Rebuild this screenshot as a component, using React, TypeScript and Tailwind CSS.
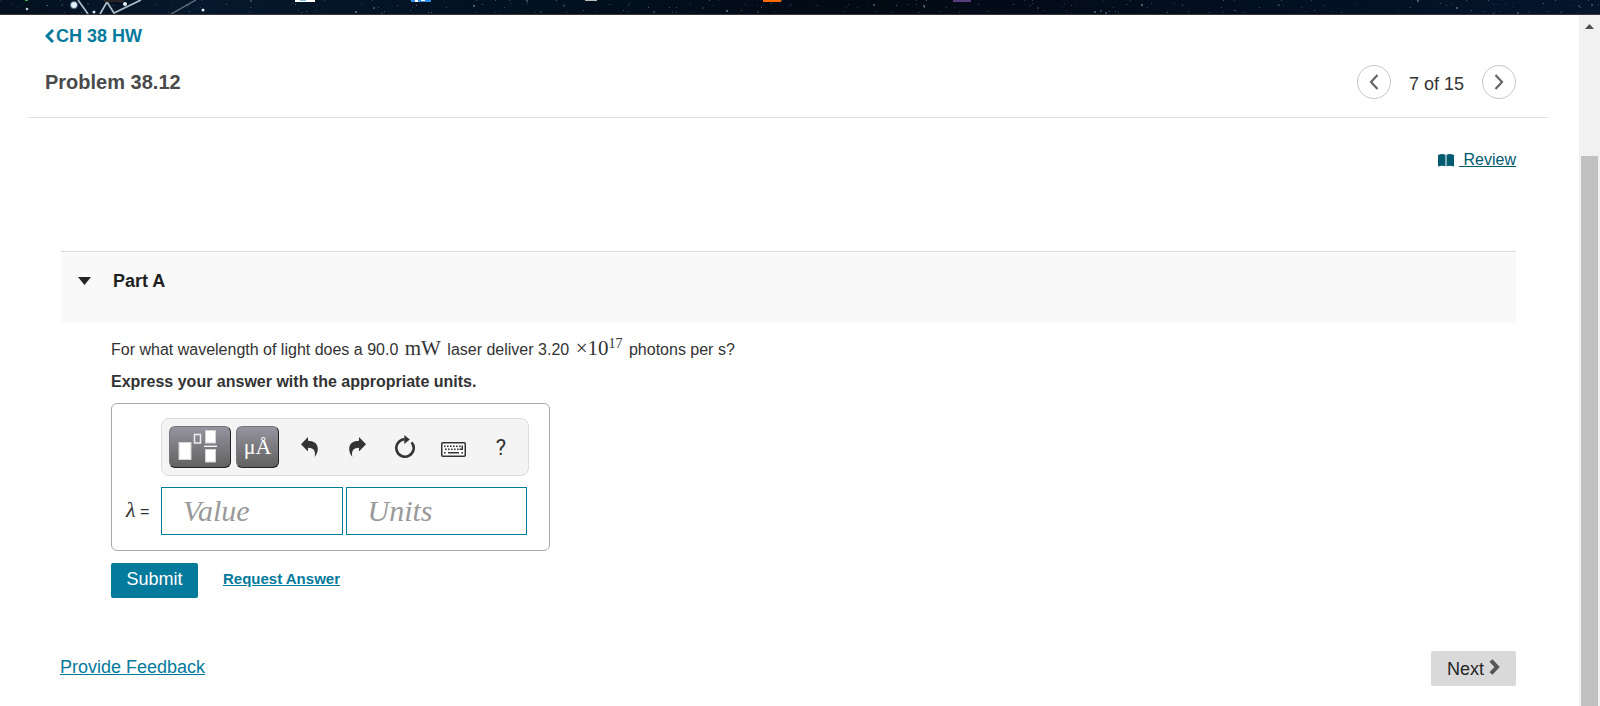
import React from "react";

const LINK = "text-[#047a9c]";

function Stars() {
  const stars = Array.from({ length: 240 }, (_, i) => {
    const x = (i * 397 + ((i * i * 31) % 211)) % 1600;
    const y = (i * 53 + ((i * i) % 7)) % 14;
    const o = 0.1 + ((i * 37) % 40) / 100;
    return { x, y, o, s: i % 9 === 0 ? 2 : 1 };
  });
  return (
    <svg aria-hidden="true" className="block h-[14px] w-full" viewBox="0 0 1600 14" preserveAspectRatio="xMidYMid slice">
      <defs>
        <linearGradient id="sky">
          <stop offset="0" stopColor="#04101f" />
          <stop offset="0.12" stopColor="#06182d" />
          <stop offset="0.3" stopColor="#021222" />
          <stop offset="0.55" stopColor="#020a14" />
          <stop offset="0.8" stopColor="#031022" />
          <stop offset="1" stopColor="#04152c" />
        </linearGradient>
      </defs>
      <rect width="1600" height="14" fill="url(#sky)" />
      {stars.map((s, i) => (
        <rect key={i} x={s.x} y={s.y} width={s.s} height={s.s} fill="#9fb8cf" opacity={s.o} />
      ))}
      <g stroke="#b9cdd6" strokeWidth="1.8" fill="none" opacity="0.9">
        <path d="M78 0 88 14M107 2 100 14M107 2l7 11 27-13" />
        <path d="M196 0 171 14" strokeWidth="1.4" opacity="0.55" />
      </g>
      <circle cx="74" cy="5" r="4.2" fill="#7fa4c4" opacity="0.5" />
      <circle cx="74" cy="5" r="3" fill="#e4f1fa" />
      <circle cx="94" cy="12" r="1.5" fill="#cfe0ee" />
      <circle cx="125" cy="4" r="2" fill="#e5eef5" />
      <circle cx="203" cy="10" r="1.5" fill="#dfe9f0" />
      <circle cx="27" cy="9" r="1.3" fill="#b9cddd" />
      <rect x="104" width="20" height="2" fill="#2a2422" />
      <rect x="25" width="3" height="1" fill="#38b54a" />
      <rect x="295" width="20" height="2" fill="#fff" />
      <rect x="300" width="6" height="1" fill="#7dbbe6" />
      <rect x="411" width="20" height="2" fill="#2d8ee8" />
      <path d="M415 0h3v2h-3zM421 0h4v1h-4z" fill="#fff" />
      <rect x="585" width="12" height="1" fill="#bbb" />
      <rect x="729" width="18" height="2" fill="none" />
      <rect x="763" width="18" height="2" fill="#ff6a00" />
      <rect x="953" width="18" height="2" fill="#563d7c" />
    </svg>
  );
}

function Undo({ flip = false }: { flip?: boolean }) {
  return (
    <svg width="17" height="20" viewBox="0 0 17 20" fill="#333" aria-hidden="true" className={flip ? "-scale-x-100" : ""}>
      <path d="M0 7.300 7 0V3.800C12.500 4 17 6.300 16.800 12.300 16.700 15.500 15.300 18 13.700 20 14.600 14.800 13.500 10.900 7 10.800V14.400Z" />
    </svg>
  );
}

function Reset() {
  return (
    <svg width="22" height="24" viewBox="0 0 22 24" fill="none" aria-hidden="true">
      <path d="M17.600 7.300A8.700 8.700 0 1 1 10.500 4.300" stroke="#333" strokeWidth="2.600" />
      <path d="M10.300 0 15.800 4.500 10.300 9Z" fill="#333" />
    </svg>
  );
}

function Keyboard() {
  return (
    <svg width="25" height="15" viewBox="0 0 25 15" fill="#333" aria-hidden="true">
      <rect x="0.750" y="0.750" width="23.500" height="13.500" rx="1" fill="#fff" stroke="#333" strokeWidth="1.500" />
      {[3, 6, 9, 12, 15, 18].map((x) => (
        <rect key={x} x={x} y="3.500" width="1.600" height="1.600" />
      ))}
      {[4, 7, 10, 13, 16].map((x) => (
        <rect key={x} x={x} y="6.500" width="1.600" height="1.600" />
      ))}
      <path d="M20.500 3.500H22v4.600h-3.500V6.500h2zM3 10h1.600v1.600H3zM7 10h11v1.600H7zM20.400 10H22v1.600h-1.600z" />
    </svg>
  );
}

const toolButton =
  "flex h-[42px] items-center justify-center rounded-[6px] border border-[#77757c] border-r-[#222] border-b-[#222] bg-linear-to-b from-[#97949f] to-[#626262]";
const iconButton = "flex h-10 w-12 items-center justify-center";
const field =
  "h-12 min-w-0 flex-1 border border-[#047a9c] bg-white px-[21px] font-['Liberation_Serif',serif] text-[30px] italic text-[#333] outline-none placeholder:text-[#999] placeholder:opacity-100";
const math = "mx-[2px] font-['Liberation_Serif',serif] text-[21px] leading-none";

export default function App() {
  return (
    <div className="flex min-h-screen flex-col bg-white font-['Liberation_Sans',Arial,sans-serif] text-base text-[#333]">
      <div className="border-b border-[#3a3536] bg-[#020d1a]">
        <Stars />
      </div>
      <div className="flex flex-1">
        <main className="flex min-w-0 flex-1 flex-col pr-[31px] pl-7">
          <header className="border-b border-[#dedede] pt-[9px] pr-8 pb-[18px] pl-[17px]">
            <a href="#hw" className={`inline-flex items-center gap-px text-lg leading-6 font-bold ${LINK}`}>
              <svg width="10" height="14" viewBox="0 0 10 14" fill="none" stroke="currentColor" strokeWidth="3" aria-hidden="true">
                <path d="M8 1 2 7l6 6" />
              </svg>
              CH 38 HW
            </a>
            <div className="mt-[15px] flex items-center justify-between">
              <h1 className="text-xl leading-7 font-bold text-[#4a4a4a]">Problem 38.12</h1>
              <nav className="flex items-center" aria-label="Problems">
                <button aria-label="Previous" className="flex size-[34px] items-center justify-center rounded-full border border-[#c7c7c7]">
                  <svg width="10" height="16" viewBox="0 0 10 16" fill="none" stroke="#666" strokeWidth="2.200" aria-hidden="true">
                    <path d="M8.500 1 2 8l6.500 7" />
                  </svg>
                </button>
                <span className="px-[18px] pt-1 text-lg leading-6">7 of 15</span>
                <button aria-label="Next problem" className="flex size-[34px] items-center justify-center rounded-full border border-[#c7c7c7]">
                  <svg width="10" height="16" viewBox="0 0 10 16" fill="none" stroke="#666" strokeWidth="2.200" aria-hidden="true">
                    <path d="M1.500 1 8 8l-6.500 7" />
                  </svg>
                </button>
              </nav>
            </div>
          </header>

          <div className="flex justify-end pt-[30px] pr-8">
            <a href="#review" className="flex items-center gap-[5px] leading-6 text-[#005a70]">
              <svg width="16" height="13" viewBox="0 0 16 13" fill="currentColor" aria-hidden="true">
                <path d="M0 1Q4-.8 7.500 .8V12.300Q4 11 0 12.600ZM16 1Q12-.8 8.500 .8V12.300Q12 11 16 12.600Z" />
              </svg>
              <span className="whitespace-pre underline"> Review</span>
            </a>
          </div>

          <section className="mt-[79px] mr-8 ml-[33px]">
            <div className="flex h-[72px] border-t border-[#dcdcdc] bg-[#f9f9f9] pt-[17px] pl-[17px]">
              <button className="flex h-6 items-center gap-[22px] text-lg leading-6 font-bold text-[#1f1f1f]">
                <svg width="13" height="8" viewBox="0 0 13 8" fill="#252525" aria-hidden="true">
                  <path d="M0 0h13L6.500 8Z" />
                </svg>
                Part A
              </button>
            </div>
            <div className="pl-[50px]">
              <p className="pt-[13px] leading-7">
                For what wavelength of light does a 90.0 <span className={math}>mW</span> laser deliver 3.20{" "}
                <span className={math}>
                  ×10<sup className="text-[14px] leading-none">17</sup>
                </span>{" "}
                photons per s?
              </p>
              <p className="pt-1 leading-7 font-bold">Express your answer with the appropriate units.</p>

              <div className="mt-[7px] w-[439px] rounded-[6px] border border-[#a9a9a9] pt-[14px] pr-5 pb-[15px] pl-[14px]">
                <div className="ml-[35px] flex h-[58px] items-center rounded-lg border border-[#dcdcdc] bg-[#f4f4f4] pl-[7px]">
                  <button aria-label="Templates" className={`${toolButton} w-[62px]`}>
                    <svg width="44" height="34" viewBox="0 0 44 34" fill="#fff" stroke="#d4d4d4" aria-hidden="true">
                      <rect x="1" y="12.500" width="12" height="17" />
                      <rect x="16.500" y="4.500" width="6" height="8.500" fill="none" stroke="#eee" strokeWidth="1.500" />
                      <rect x="27.500" y="0.500" width="10" height="12.500" />
                      <rect x="27.500" y="19.500" width="10" height="12.500" />
                      <path d="M26 16.300h13" stroke="#fff" strokeWidth="1.300" />
                    </svg>
                  </button>
                  <button className={`${toolButton} ml-[5px] w-[43px] font-['Liberation_Serif',serif] text-[22px] leading-none text-white`}>
                    μÅ
                  </button>
                  <button aria-label="Undo" className={`${iconButton} ml-[6px]`}>
                    <Undo />
                  </button>
                  <button aria-label="Redo" className={iconButton}>
                    <Undo flip />
                  </button>
                  <button aria-label="Reset" className={iconButton}>
                    <Reset />
                  </button>
                  <button aria-label="Keyboard shortcuts" className={`${iconButton} pt-1`}>
                    <Keyboard />
                  </button>
                  <button aria-label="Help" className={`${iconButton} font-['Roboto',sans-serif] text-[22px]`}>
                    ?
                  </button>
                </div>
                <div className="mt-[11px] flex items-center gap-[3px] pr-[2px]">
                  <label htmlFor="value" className="w-8 whitespace-nowrap">
                    <span className="font-['Liberation_Serif',serif] text-[22px] leading-6 italic">λ</span> =
                  </label>
                  <input id="value" placeholder="Value" className={field} />
                  <input aria-label="Units" placeholder="Units" className={field} />
                </div>
              </div>

              <div className="mt-3 flex items-center gap-[25px]">
                <button className="flex h-[35px] w-[87px] justify-center rounded-xs bg-[#047a9c] pt-1 text-lg leading-6 text-white">
                  Submit
                </button>
                <a href="#answer" className={`pb-1 text-[15px] leading-5 font-bold underline ${LINK}`}>
                  Request Answer
                </a>
              </div>
            </div>
          </section>

          <footer className="mt-[53px] mr-8 ml-8 flex items-center justify-between">
            <a href="#feedback" className={`pb-1 text-lg leading-6 underline ${LINK}`}>
              Provide Feedback
            </a>
            <button className="flex h-[35px] items-center gap-[5px] rounded-xs bg-[#d9d9d9] px-4 text-lg leading-6 text-[#252525]">
              Next
              <svg width="11" height="16" viewBox="0 0 11 16" fill="none" stroke="#555" strokeWidth="4" aria-hidden="true" className="mb-1">
                <path d="M2 1.500 8 8l-6 6.500" />
              </svg>
            </button>
          </footer>
        </main>
        <div aria-hidden="true" className="flex w-[21px] flex-col items-center bg-[#f1f1f1] pt-[9px]">
          <svg width="9" height="5" viewBox="0 0 9 5" fill="#505050">
            <path d="M4.500 0 9 5H0Z" />
          </svg>
          <div className="mt-[127px] w-[17px] flex-1 bg-[#c1c1c1]" />
        </div>
      </div>
    </div>
  );
}
